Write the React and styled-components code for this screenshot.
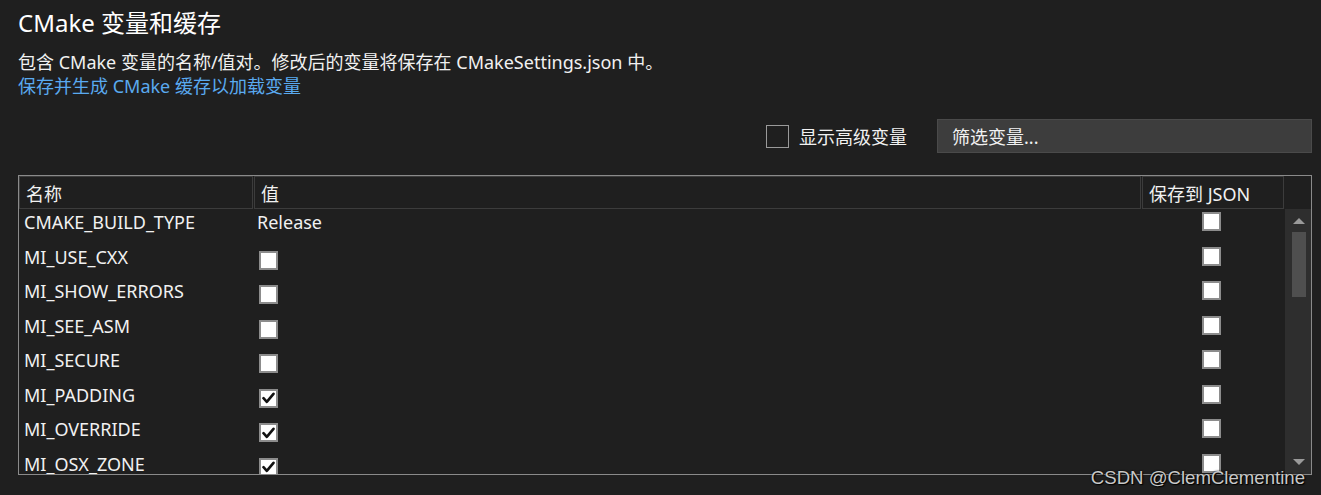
import React from 'react';
import styled, { createGlobalStyle } from 'styled-components';

const GlobalStyle = createGlobalStyle`
  html, body {
    margin: 0;
    padding: 0;
    background: #1f1f1f;
  }
  body {
    font-family: "Noto Sans", "Noto Sans CJK SC", sans-serif;
    color: #f1f1f1;
  }
`;

const Page = styled.div`
  position: relative;
  width: 1321px;
  height: 495px;
  box-sizing: border-box;
  padding: 6px 9px 0 18px;
  background: #1f1f1f;
  overflow: hidden;
`;

const Title = styled.h1`
  margin: 0;
  font-size: 24px;
  font-weight: 400;
  line-height: 34px;
  color: #ffffff;
`;

const Description = styled.p`
  margin: 10px 0 0;
  font-size: 18px;
  line-height: 24px;
  color: #f1f1f1;
`;

const Link = styled.a`
  display: block;
  font-size: 18px;
  line-height: 24px;
  color: #5aaaf0;
  text-decoration: none;
  cursor: pointer;
`;

const Toolbar = styled.div`
  display: flex;
  justify-content: flex-end;
  align-items: center;
  gap: 30px;
  margin-top: 21px;
  height: 34px;
`;

const Toggle = styled.label`
  display: flex;
  align-items: center;
  gap: 10px;
  font-size: 18px;
  color: #f1f1f1;
`;

const EmptyBox = styled.span`
  width: 23px;
  height: 23px;
  border: 1px solid #9a9a9a;
  box-sizing: border-box;
  display: inline-block;
`;

const Filter = styled.div`
  width: 375px;
  height: 34px;
  box-sizing: border-box;
  background: #3d3d3d;
  border: 1px solid #4a4a4a;
  padding: 0 14px;
  display: flex;
  align-items: center;
  font-size: 18px;
  color: #f1f1f1;
`;

const Table = styled.div`
  margin-top: 22px;
  height: 300px;
  box-sizing: border-box;
  border: 1px solid #8a8a8a;
  display: grid;
  grid-template-columns: 1fr 27px;
  grid-template-rows: 33px 1fr;
  overflow: hidden;
`;

const Columns = `
  display: grid;
  grid-template-columns: 235px 888px 143px;
`;

const HeaderRow = styled.div`
  ${Columns}
`;

const HeaderCell = styled.div`
  border: 1px solid #3c3c3c;
  margin-right: 1px;
  display: flex;
  align-items: center;
  padding-left: 6px;
  font-size: 18px;
  color: #f1f1f1;
  white-space: nowrap;
`;

const HeaderFiller = styled.div``;

const Body = styled.div`
  overflow: hidden;
`;

const Row = styled.div`
  ${Columns}
  height: 34.5px;
`;

const NameCell = styled.div`
  padding: 1px 0 0 5px;
  font-size: 18px;
  line-height: 24px;
  color: #f1f1f1;
  white-space: nowrap;
`;

const ValueCell = styled.div`
  padding: ${p => (p.$box ? '7px 0 0 5px' : '1px 0 0 3px')};
  font-size: 18px;
  line-height: 24px;
  color: #f1f1f1;
`;

const SaveCell = styled.div`
  display: flex;
  justify-content: center;
  padding: 3px 0 0 0;
  padding-right: 4px;
`;

const Box = styled.span`
  width: 19px;
  height: 19px;
  box-sizing: border-box;
  border: 2px solid #8c8c8c;
  background: #ffffff;
  display: flex;
  align-items: center;
  justify-content: center;
`;

const Scrollbar = styled.div`
  grid-row: 2;
  grid-column: 2;
  background: #2e2e2e;
  display: flex;
  flex-direction: column;
  align-items: center;
  padding-top: 9px;
`;

const Thumb = styled.div`
  width: 14px;
  height: 65px;
  margin-top: 8px;
  background: #4f4f4f;
`;

const Spacer = styled.div`
  flex: 1;
`;

const Arrow = styled.div`
  width: 0;
  height: 0;
  border-left: 6px solid transparent;
  border-right: 6px solid transparent;
  ${p => (p.$down
    ? 'border-top: 6px solid #9a9a9a; margin-bottom: 9px;'
    : 'border-bottom: 6px solid #9a9a9a;')}
`;

const Watermark = styled.div`
  position: absolute;
  right: 16px;
  bottom: 6px;
  font-family: "Liberation Sans", Arial, sans-serif;
  font-size: 18.6px;
  color: #c8c8c8;
  text-shadow: 0 0 2px #000, 1px 1px 1px #000;
`;

const Check = () => (
  <svg width="13" height="12" viewBox="0 0 13 12">
    <path d="M1.5 6.2 L4.8 9.8 L11.5 1.8" fill="none" stroke="#111" strokeWidth="2.6" strokeLinecap="round" strokeLinejoin="round" />
  </svg>
);

const CheckBox = ({ checked }) => <Box>{checked && <Check />}</Box>;

const rows = [
  { name: 'CMAKE_BUILD_TYPE', value: 'Release' },
  { name: 'MI_USE_CXX', checked: false },
  { name: 'MI_SHOW_ERRORS', checked: false },
  { name: 'MI_SEE_ASM', checked: false },
  { name: 'MI_SECURE', checked: false },
  { name: 'MI_PADDING', checked: true },
  { name: 'MI_OVERRIDE', checked: true },
  { name: 'MI_OSX_ZONE', checked: true },
];

export default function App() {
  return (
    <Page>
      <GlobalStyle />
      <Title>CMake 变量和缓存</Title>
      <Description>包含 CMake 变量的名称/值对。修改后的变量将保存在 CMakeSettings.json 中。</Description>
      <Link>保存并生成 CMake 缓存以加载变量</Link>

      <Toolbar>
        <Toggle>
          <EmptyBox />
          显示高级变量
        </Toggle>
        <Filter>筛选变量...</Filter>
      </Toolbar>

      <Table>
        <HeaderRow>
          <HeaderCell>名称</HeaderCell>
          <HeaderCell>值</HeaderCell>
          <HeaderCell>保存到 JSON</HeaderCell>
        </HeaderRow>
        <HeaderFiller />
        <Body>
          {rows.map(row => (
            <Row key={row.name}>
              <NameCell>{row.name}</NameCell>
              {row.value
                ? <ValueCell>{row.value}</ValueCell>
                : <ValueCell $box><CheckBox checked={row.checked} /></ValueCell>}
              <SaveCell><CheckBox /></SaveCell>
            </Row>
          ))}
        </Body>
        <Scrollbar>
          <Arrow />
          <Thumb />
          <Spacer />
          <Arrow $down />
        </Scrollbar>
      </Table>

      <Watermark>CSDN @ClemClementine</Watermark>
    </Page>
  );
}
